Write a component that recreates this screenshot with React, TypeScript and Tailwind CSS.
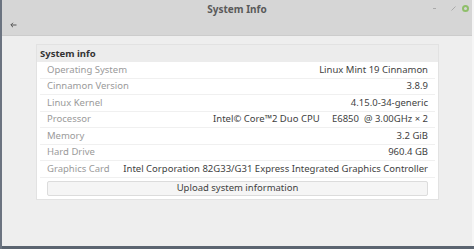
import React from "react";

const rows: { label: string; value: string }[] = [
  { label: "Operating System", value: "Linux Mint 19 Cinnamon" },
  { label: "Cinnamon Version", value: "3.8.9" },
  { label: "Linux Kernel", value: "4.15.0-34-generic" },
  { label: "Processor", value: "Intel© Core™2 Duo CPU     E6850  @ 3.00GHz × 2" },
  { label: "Memory", value: "3.2 GiB" },
  { label: "Hard Drive", value: "960.4 GB" },
  { label: "Graphics Card", value: "Intel Corporation 82G33/G31 Express Integrated Graphics Controller" },
];

const App: React.FC = () => {
  return (
    <div
      className="w-[474px] h-[249px] bg-[#5b6470] flex overflow-hidden"
      style={{ fontFamily: '"Noto Sans", sans-serif' }}
    >
      <div className="w-[2px] bg-[#6b7380]" />
      <div className="flex-1 flex flex-col h-[246px] bg-[#eeeeee] border-r-[2px] border-[#f6f6f6]">
        {/* title bar + toolbar */}
        <div className="h-[36px] bg-[#d6d6d6] border-b border-[#cccccc] flex flex-col">
          <div className="h-[17px] flex items-center relative">
            <span className="w-full text-center text-[10px] font-bold text-[#5a5a5a] pt-[1px]">System Info</span>
            <div className="absolute right-[3px] top-[5px] flex items-center">
              <span className="w-[3px] h-[1px] bg-[#aaaaaa]" />
              <svg className="ml-[15px]" width="5" height="5" viewBox="0 0 5 5">
                <path d="M0.5 4.5 L4.5 0.5" stroke="#aaaaaa" strokeWidth="1" />
              </svg>
              <span className="ml-[6px] w-[7px] h-[7px] rounded-full border-[2px] border-[#8fbf6a]" />
            </div>
          </div>
          <div className="h-[18px] flex items-center pl-[8px] pb-[2px]">
            <svg width="7" height="6" viewBox="0 0 7 6">
              <path d="M6.5 3 H1 M3 0.8 L0.8 3 L3 5.2" stroke="#555" strokeWidth="1" fill="none" />
            </svg>
          </div>
        </div>

        {/* content */}
        <div className="pt-[8px] pl-[34px] pr-[33px]">
          <div className="bg-white border border-[#e2e2e2] flex flex-col">
            <div className="h-[17px] bg-[#ececec] flex items-center px-[3px] pt-[1px] text-[9.5px] font-bold text-[#333]">
              System info
            </div>
            {rows.map((r) => (
              <div
                key={r.label}
                className="h-[16.5px] mx-[3px] border-b border-[#f0f0f0] flex items-center justify-between px-[7px] text-[9.5px] whitespace-pre"
              >
                <span className="text-[#9a9a9a]">{r.label}</span>
                <span className="text-[#3f3f3f]">{r.value}</span>
              </div>
            ))}
            <div className="px-[10px] pt-[3px] pb-[3px]">
              <div className="h-[15px] bg-[#f5f5f5] border border-[#dcdcdc] rounded-[2px] flex items-center justify-center text-[9.5px] text-[#3f3f3f]">
                Upload system information
              </div>
            </div>
          </div>
        </div>
      </div>
    </div>
  );
};

export default App;
